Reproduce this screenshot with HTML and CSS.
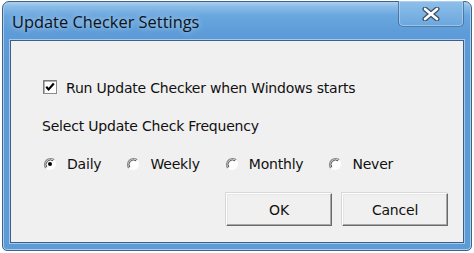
FILE: index.html
```html
<!DOCTYPE html>
<html>
<head>
<meta charset="utf-8">
<link rel="stylesheet" href="styles.css">
</head>
<body>
<div class="window">
  <div class="titlebar">
    <div class="title">Update Checker Settings</div>
    <div class="close">
      <svg width="18" height="14" viewBox="0 0 18 14">
        <path d="M3 2 L15 12 M15 2 L3 12" stroke="#3a4f66" stroke-width="5" stroke-linecap="round"/>
        <path d="M3 2 L15 12 M15 2 L3 12" stroke="#ffffff" stroke-width="2.6" stroke-linecap="round"/>
      </svg>
    </div>
  </div>
  <div class="client">
    <div class="row check-row">
      <span class="checkbox">
        <svg width="14" height="14" viewBox="0 0 14 14">
          <rect x="0.5" y="0.5" width="13" height="13" fill="#ffffff" stroke="#8a8a8a"/>
          <path d="M1 1 H13 M1 1 V13" stroke="#6a6a6a" stroke-width="1"/>
          <path d="M3.2 6.8 L5.6 9.4 L10.8 3.6" stroke="#000" stroke-width="2.2" fill="none"/>
        </svg>
      </span>
      <span class="label">Run Update Checker when Windows starts</span>
    </div>
    <div class="row heading">Select Update Check Frequency</div>
    <div class="row radios">
      <label class="radio">
        <svg width="14" height="14" viewBox="0 0 14 14">
          <circle cx="7" cy="7" r="6" fill="#ffffff"/>
          <path d="M11.2 2.8 A6 6 0 0 0 2.8 11.2" stroke="#8c8c8c" stroke-width="1.4" fill="none"/>
          <path d="M10.2 3.8 A4.6 4.6 0 0 0 3.8 10.2" stroke="#4a4a4a" stroke-width="1" fill="none"/>
          <circle cx="7" cy="7" r="2" fill="#000"/>
        </svg>
        <span>Daily</span>
      </label>
      <label class="radio">
        <svg width="14" height="14" viewBox="0 0 14 14">
          <circle cx="7" cy="7" r="6" fill="#ffffff"/>
          <path d="M11.2 2.8 A6 6 0 0 0 2.8 11.2" stroke="#8c8c8c" stroke-width="1.4" fill="none"/>
          <path d="M10.2 3.8 A4.6 4.6 0 0 0 3.8 10.2" stroke="#4a4a4a" stroke-width="1" fill="none"/>
        </svg>
        <span>Weekly</span>
      </label>
      <label class="radio">
        <svg width="14" height="14" viewBox="0 0 14 14">
          <circle cx="7" cy="7" r="6" fill="#ffffff"/>
          <path d="M11.2 2.8 A6 6 0 0 0 2.8 11.2" stroke="#8c8c8c" stroke-width="1.4" fill="none"/>
          <path d="M10.2 3.8 A4.6 4.6 0 0 0 3.8 10.2" stroke="#4a4a4a" stroke-width="1" fill="none"/>
        </svg>
        <span>Monthly</span>
      </label>
      <label class="radio">
        <svg width="14" height="14" viewBox="0 0 14 14">
          <circle cx="7" cy="7" r="6" fill="#ffffff"/>
          <path d="M11.2 2.8 A6 6 0 0 0 2.8 11.2" stroke="#8c8c8c" stroke-width="1.4" fill="none"/>
          <path d="M10.2 3.8 A4.6 4.6 0 0 0 3.8 10.2" stroke="#4a4a4a" stroke-width="1" fill="none"/>
        </svg>
        <span>Never</span>
      </label>
    </div>
    <div class="buttons">
      <div class="btn">OK</div>
      <div class="btn">Cancel</div>
    </div>
  </div>
</div>
</body>
</html>
```

FILE: styles.css
```css
html, body {
  margin: 0;
  padding: 0;
  background: #ffffff;
}
body {
  width: 474px;
  height: 253px;
  overflow: hidden;
}
.window {
  box-sizing: border-box;
  margin: 1px 0 0 2px;
  width: 470px;
  height: 250px;
  border: 1px solid #3f6288;
  border-radius: 7px 7px 5px 5px;
  background: linear-gradient(#b4d2ee 0px, #8dbde8 4px, #68a6de 14px, #5d9cd8 30px, #5b99d5 60px, #5d9bd6 100%);
  box-shadow: inset 0 0 0 1px #a9cdee;
  display: flex;
  flex-direction: column;
}
.titlebar {
  height: 38px;
  display: flex;
  align-items: flex-start;
  justify-content: space-between;
}
.title {
  font-family: "Open Sans", "Noto Sans", sans-serif;
  font-size: 16.4px;
  color: #0c131b;
  padding: 8px 0 0 9px;
  text-shadow: 0 0 6px rgba(255,255,255,0.7);
}
.close {
  box-sizing: border-box;
  width: 66px;
  height: 26px;
  margin: -1px 7px 0 0;
  border: 1px solid rgba(40,70,110,0.55);
  border-top: none;
  border-radius: 0 0 5px 5px;
  box-shadow: inset 0 0 0 1px rgba(200,225,250,0.5);
  background: linear-gradient(#8ebfe9, #6aa7de);
  display: flex;
  align-items: center;
  justify-content: center;
}
.close svg { display: block; }
.client {
  box-sizing: border-box;
  flex: 1;
  margin: 0 7px 7px 7px;
  background: #f0f0f0;
  border: 1px solid #3b5f86;
  box-shadow: 0 0 0 1px #a3c9ec;
  padding: 35px 15px 0 31px;
  font-family: "DejaVu Sans", sans-serif;
  font-size: 14px;
  color: #111111;
  letter-spacing: -0.2px;
  display: flex;
  flex-direction: column;
}
.row {
  height: 20px;
  display: flex;
  align-items: center;
}
.check-row {
  margin-left: 1px;
  margin-top: 1px;
}
.checkbox svg { display: block; }
.check-row .label {
  margin-left: 9px;
  padding-top: 2px;
}
.heading {
  margin-top: 19px;
}
.radios {
  margin-top: 18px;
  margin-left: 1px;
  gap: 25px;
}
.radio {
  display: flex;
  align-items: center;
  gap: 10px;
}
.radio svg { display: block; }
.buttons {
  margin-top: 19px;
  display: flex;
  justify-content: flex-end;
  gap: 10px;
}
.btn {
  box-sizing: border-box;
  width: 106px;
  height: 33px;
  background: #f0f0f0;
  border-top: 1px solid #ffffff;
  border-left: 1px solid #ffffff;
  border-right: 1px solid #6a6a6a;
  border-bottom: 1px solid #6a6a6a;
  box-shadow: inset -1px -1px 0 #a8a8a8, inset 1px 1px 0 #e6e6e6, -1px -1px 0 #d8d8d8;
  display: flex;
  align-items: center;
  justify-content: center;
  font-family: "DejaVu Sans", sans-serif;
  font-size: 14px;
  color: #111111;
}
```
